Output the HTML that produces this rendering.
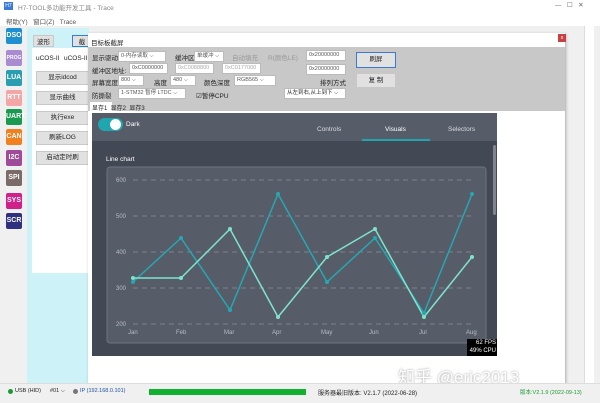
<!DOCTYPE html>
<html><head><meta charset="utf-8"><style>
*{margin:0;padding:0;box-sizing:border-box}
body{width:600px;height:403px;overflow:hidden;background:#f0f0f0;font-family:"Liberation Sans","Noto Sans CJK SC",sans-serif;font-size:7px;color:#222;position:relative}
.a{position:absolute}
.ic{position:absolute;left:6px;width:16px;height:16px;color:#fff;font-size:7px;font-weight:bold;text-align:center;line-height:16px;border-radius:2px}
.btn{position:absolute;background:#e1e1e1;border:1px solid #c8c8c8;font-size:6.5px;text-align:center}
.f{position:absolute;background:#fff;border:1px solid #bbb;font-size:5.5px;color:#555;padding-left:2px;line-height:9px;height:11px}
.l{position:absolute;font-size:6.5px;color:#222}
</style></head><body>
<!-- title -->
<div class="a" style="left:0;top:0;width:600px;height:13px;background:#fff"></div>
<div class="a" style="left:4px;top:2px;width:9px;height:8px;background:#3a7bd5;color:#fff;font-size:5px;text-align:center;line-height:8px">H7</div>
<div class="l" style="left:18px;top:2px;color:#888">H7-TOOL多功能开发工具 - Trace</div>
<div class="l" style="left:555px;top:1px;color:#666">—&nbsp;&nbsp;&nbsp;☐&nbsp;&nbsp;&nbsp;✕</div>
<div class="a" style="left:0;top:13px;width:600px;height:13px;background:#fff"></div>
<div class="l" style="left:6px;top:16px;color:#555">帮助(Y)&nbsp;&nbsp;&nbsp;窗口(Z)&nbsp;&nbsp;&nbsp;Trace</div>
<!-- sidebar -->
<div class="ic" style="top:28px;background:#1f8fd0">DSO</div>
<div class="ic" style="top:50px;background:#a98bd0;font-size:5px">PROG</div>
<div class="ic" style="top:70px;background:#2a9db0">LUA</div>
<div class="ic" style="top:90px;background:#f3a6a6">RTT</div>
<div class="ic" style="top:109px;background:#1a9a50">UART</div>
<div class="ic" style="top:129px;background:#f08020">CAN</div>
<div class="ic" style="top:150px;background:#a04a9a">I2C</div>
<div class="ic" style="top:170px;background:#7a6a68">SPI</div>
<div class="ic" style="top:193px;background:#d0208a">SYS</div>
<div class="ic" style="top:213px;background:#303080">SCR</div>
<!-- main left panel -->
<div class="a" style="left:27px;top:28px;width:62px;height:355px;background:#cdf3f9"></div>
<div class="a" style="left:32px;top:48px;width:57px;height:225px;background:#fff"></div>
<div class="btn" style="left:33px;top:35px;width:21px;height:12px">波形</div>
<div class="btn" style="left:72px;top:35px;width:20px;height:12px;border-color:#3a7bd5">截</div>
<div class="l" style="left:36px;top:55px">uCOS-II</div>
<div class="l" style="left:64px;top:55px">uCOS-II</div>
<div class="btn" style="left:36px;top:71px;width:53px;height:14px;line-height:12px">显示idcod</div>
<div class="btn" style="left:36px;top:91px;width:53px;height:14px;line-height:12px">显示曲线</div>
<div class="btn" style="left:36px;top:111px;width:53px;height:14px;line-height:12px">执行exe</div>
<div class="btn" style="left:36px;top:131px;width:53px;height:14px;line-height:12px">刷新LOG</div>
<div class="btn" style="left:36px;top:151px;width:53px;height:14px;line-height:12px">启动定时刷</div>
<!-- right edge -->
<div class="a" style="left:584px;top:26px;width:10px;height:357px;background:#fff;border-left:1px solid #ddd"></div>
<!-- dialog -->
<div class="a" style="left:88px;top:33px;width:477px;height:352px;background:#fff;box-shadow:1px 1px 3px rgba(0,0,0,.3)"></div>
<div class="l" style="left:91px;top:37px">目标板截屏</div>
<div class="a" style="left:558px;top:34px;width:8px;height:8px;background:#c84040;color:#fff;font-size:5px;text-align:center;line-height:8px">x</div>
<div class="a" style="left:88px;top:47px;width:477px;height:64px;background:#c8c8c8"></div>
<div class="l" style="left:92px;top:52px">显示驱动</div>
<div class="f" style="left:118px;top:51px;width:48px">0-内存读取 ⌵</div>
<div class="l" style="left:175px;top:52px">缓冲区</div>
<div class="f" style="left:194px;top:51px;width:30px">单缓冲 ⌵</div>
<div class="l" style="left:232px;top:52px;color:#999">自动填充</div>
<div class="l" style="left:268px;top:52px;color:#999">R(颜色LE)</div>
<div class="f" style="left:306px;top:50px;width:40px">0x20000000</div>
<div class="l" style="left:92px;top:65px">缓冲区地址:</div>
<div class="f" style="left:129px;top:63px;width:39px">0xC0000000</div>
<div class="f" style="left:175px;top:63px;width:39px;color:#aaa">0xC0088800</div>
<div class="f" style="left:222px;top:63px;width:39px;color:#aaa">0xC0177000</div>
<div class="f" style="left:306px;top:64px;width:40px">0x20000000</div>
<div class="l" style="left:92px;top:77px">屏幕宽度</div>
<div class="f" style="left:118px;top:75px;width:26px">800 ⌵</div>
<div class="l" style="left:154px;top:77px">高度</div>
<div class="f" style="left:170px;top:75px;width:26px">480 ⌵</div>
<div class="l" style="left:204px;top:77px">颜色深度</div>
<div class="f" style="left:234px;top:75px;width:42px">RGB565 ⌵</div>
<div class="l" style="left:320px;top:77px">排列方式</div>
<div class="l" style="left:92px;top:90px">防撕裂</div>
<div class="f" style="left:118px;top:88px;width:68px">1-STM32 暂停 LTDC ⌵</div>
<div class="l" style="left:196px;top:90px">☑暂停CPU</div>
<div class="f" style="left:284px;top:88px;width:62px;color:#222">从左到右,从上到下 ⌵</div>
<div class="btn" style="left:356px;top:52px;width:40px;height:16px;line-height:14px;border-color:#3a7bd5">刷屏</div>
<div class="btn" style="left:356px;top:73px;width:40px;height:15px;line-height:13px">复 制</div>
<div class="a" style="left:90px;top:102px;width:22px;height:10px;background:#fff"></div>
<div class="l" style="left:92px;top:103px;font-size:6px">显存1&nbsp;&nbsp;显存2&nbsp;&nbsp;显存3</div>
<!-- dark screen -->
<div class="a" style="left:92px;top:113px;width:405px;height:243px;background:#434855"></div>
<div class="a" style="left:92px;top:113px;width:405px;height:28px;background:#575c69"></div>
<div class="a" style="left:98px;top:118px;width:25px;height:13px;border-radius:7px;background:#21a6b0"></div>
<div class="a" style="left:110px;top:119px;width:11px;height:11px;border-radius:6px;background:#fff"></div>
<div class="l" style="left:126px;top:121px;color:#fff">Dark</div>
<div class="l" style="left:317px;top:126px;color:#d8dbe0">Controls</div>
<div class="l" style="left:385px;top:126px;color:#fff">Visuals</div>
<div class="l" style="left:448px;top:126px;color:#d8dbe0">Selectors</div>
<div class="a" style="left:362px;top:139px;width:68px;height:2px;background:#21a6b0"></div>
<div class="a" style="left:493px;top:145px;width:3px;height:70px;background:#80848e;border-radius:2px"></div>
<div class="l" style="left:106px;top:156px;color:#fff;font-size:6.5px">Line chart</div>
<svg class="a" style="left:0;top:0" width="600" height="403">
<rect x="107" y="167" width="379" height="176" rx="3" fill="#575c69" stroke="#6e7380"/>
<g stroke="#8a8e99" stroke-width="0.8" stroke-dasharray="5,4">
<line x1="133" y1="180" x2="472" y2="180"/><line x1="133" y1="216" x2="472" y2="216"/><line x1="133" y1="252" x2="472" y2="252"/><line x1="133" y1="288" x2="472" y2="288"/><line x1="133" y1="324" x2="472" y2="324"/></g>
<g fill="#b8bcc4" font-size="6" font-family="Liberation Sans">
<text x="116" y="182">600</text><text x="116" y="218">500</text><text x="116" y="254">400</text><text x="116" y="290">300</text><text x="116" y="326">200</text>
<text x="128" y="334">Jan</text><text x="176" y="334">Feb</text><text x="224" y="334">Mar</text><text x="272" y="334">Apr</text><text x="321" y="334">May</text><text x="369" y="334">Jun</text><text x="419" y="334">Jul</text><text x="466" y="334">Aug</text></g>
<polyline fill="none" stroke="#26a7b1" stroke-width="1.5" points="133,282 181,238 230,310 278,194 327,282 375,238 424,313 472,194"/>
<polyline fill="none" stroke="#7fe3cc" stroke-width="1.5" points="133,278 181,278 230,229 278,317 327,257 375,229 424,317 472,257"/>
<g fill="#26a7b1"><circle cx="133" cy="282" r="2"/><circle cx="181" cy="238" r="2"/><circle cx="230" cy="310" r="2"/><circle cx="278" cy="194" r="2"/><circle cx="327" cy="282" r="2"/><circle cx="375" cy="238" r="2"/><circle cx="424" cy="313" r="2"/><circle cx="472" cy="194" r="2"/></g>
<g fill="#7fe3cc"><circle cx="133" cy="278" r="2"/><circle cx="181" cy="278" r="2"/><circle cx="230" cy="229" r="2"/><circle cx="278" cy="317" r="2"/><circle cx="327" cy="257" r="2"/><circle cx="375" cy="229" r="2"/><circle cx="424" cy="317" r="2"/><circle cx="472" cy="257" r="2"/></g>
</svg>
<div class="a" style="left:467px;top:339px;width:30px;height:17px;background:#000;color:#fff;font-size:6px;text-align:right;line-height:8px;padding-right:1px">62 FPS<br>49% CPU</div>
<div class="a" style="left:398px;top:363px;font-size:17px;color:#fff;text-shadow:0 0 2px #888;opacity:.9">知乎 @eric2013</div>
<!-- status -->
<div class="a" style="left:0;top:383px;width:600px;height:20px;background:#f0f0f0;border-top:1px solid #ddd"></div>
<div class="a" style="left:8px;top:389px;width:5px;height:5px;border-radius:3px;background:#1a9a30"></div>
<div class="l" style="left:15px;top:388px;font-size:5.5px">USB (HID)</div>
<div class="l" style="left:50px;top:388px;font-size:5.5px">#01 ⌵</div>
<div class="a" style="left:73px;top:389px;width:5px;height:5px;border-radius:3px;background:#777"></div>
<div class="l" style="left:80px;top:388px;font-size:5.5px;color:#2050a0">IP (192.168.0.101)</div>
<div class="a" style="left:149px;top:389px;width:157px;height:6px;background:#12b030"></div>
<div class="l" style="left:318px;top:388px;font-size:6px">服务器最旧版本: V2.1.7 (2022-06-28)</div>
<div class="l" style="left:520px;top:388px;font-size:5.5px;color:#1a9a30">版本:V2.1.9 (2022-09-13)</div>
</body></html>
